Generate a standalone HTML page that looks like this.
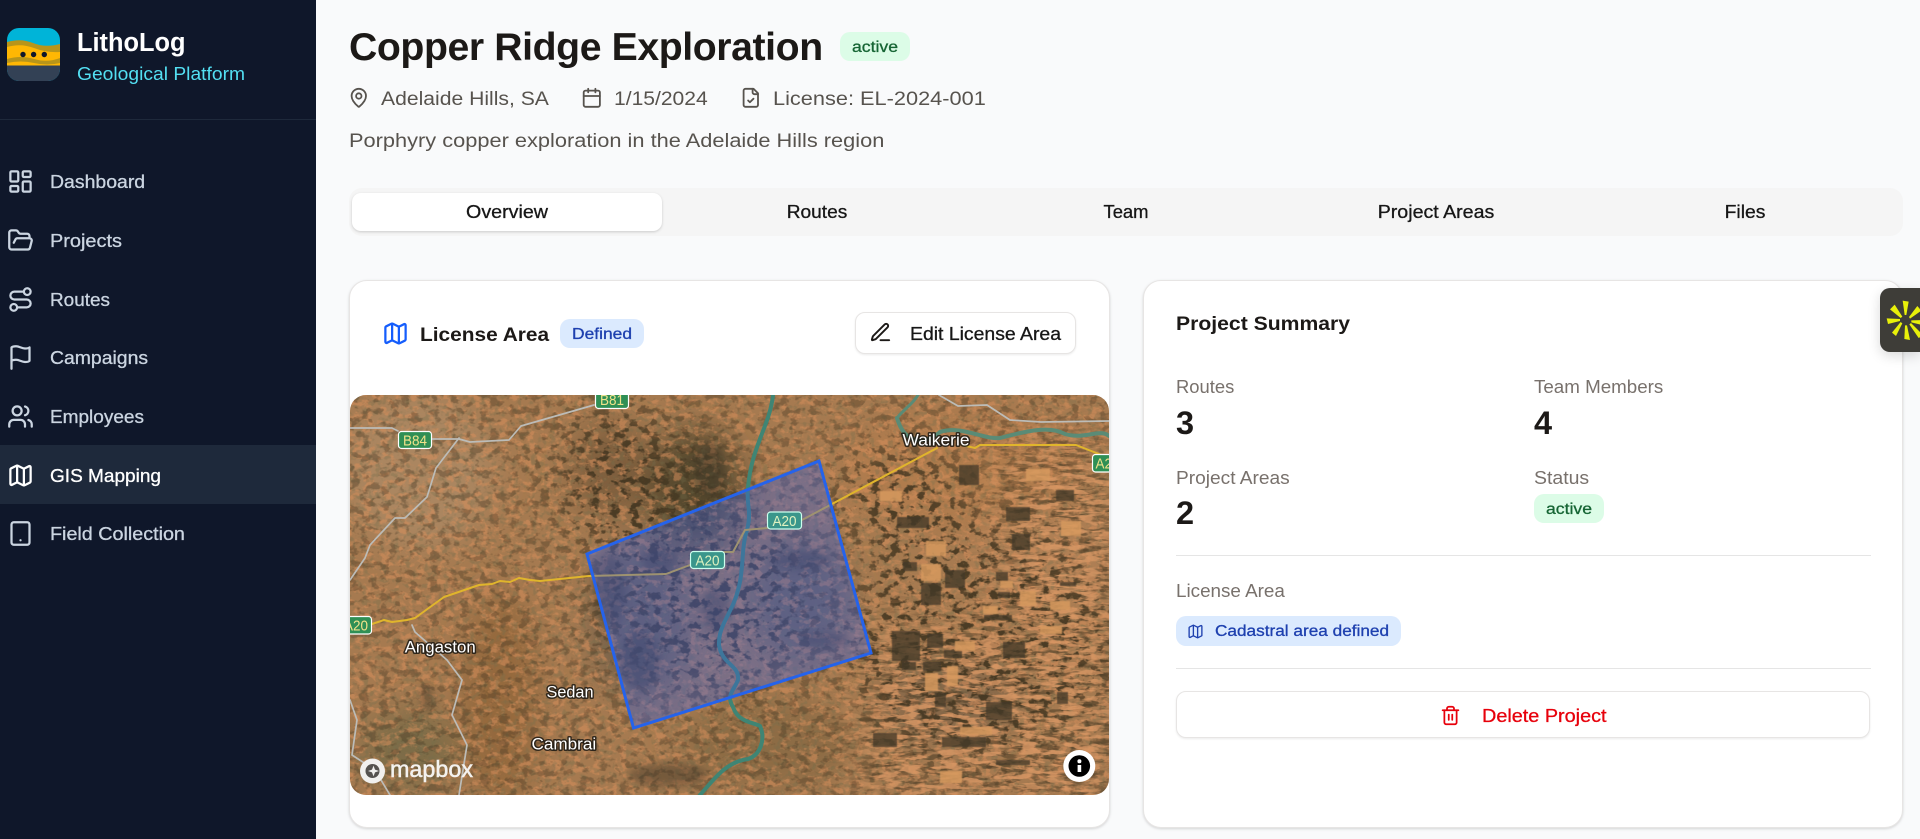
<!DOCTYPE html>
<html lang="en"><head><meta charset="utf-8"><title>Copper Ridge Exploration</title>
<style>
*{box-sizing:border-box}
html,body{margin:0;padding:0;width:1920px;height:839px;overflow:hidden;background:#f9fafb;font-family:"Liberation Sans",sans-serif}
.t{position:absolute;white-space:nowrap;line-height:0;transform-origin:0 0}
.c{text-align:center;transform-origin:50% 0}
.m{-webkit-text-stroke:.3px currentColor}
.abs{position:absolute}
svg.i{position:absolute;fill:none;stroke:currentColor;stroke-width:2;stroke-linecap:round;stroke-linejoin:round}
.nav{color:#cbd5e1;font-size:18.4px}
.lab{font-size:18.4px;color:#78716c}
.val{font-size:32.5px;font-weight:700;color:#1c1917}
.meta{font-size:19.6px;color:#57534e}
.tab{font-size:18.4px;color:#171717}
.badge{position:absolute;background:#dcfce7;border-radius:10px;height:29px}
.card{position:absolute;background:#fff;border:1px solid #e7e5e4;border-radius:18px;top:279.5px;height:548px;box-shadow:0 1px 3px rgba(0,0,0,.1),0 1px 2px rgba(0,0,0,.06)}
</style></head><body>

<div class="abs" style="left:0;top:0;width:316px;height:839px;background:#0f172a"></div>
<svg class="abs" style="left:7px;top:28px" width="53" height="53" viewBox="0 0 53 53"><defs><clipPath id="lg"><rect width="53" height="53" rx="12"/></clipPath></defs><g clip-path="url(#lg)"><rect width="53" height="53" fill="#00b4d8"/><path d="M0 14Q14 10 26 15T53 16V37H0Z" fill="#b8951a"/><path d="M0 19Q14 15 27 20T53 24V37H0Z" fill="#ffb703"/><path d="M0 31Q14 27 27 31T53 30V37H0Z" fill="#b8951a"/><path d="M0 35Q14 32 27 35T53 35V38H0Z" fill="#ffb703"/><rect y="37.5" width="53" height="16" fill="#334155"/><circle cx="16" cy="26.5" r="2.7" fill="#0f172a"/><circle cx="26.6" cy="26.5" r="2.7" fill="#0f172a"/><circle cx="37.3" cy="26.5" r="2.7" fill="#0f172a"/></g></svg>
<div class="t" style="left:77px;top:43.2px;font-size:25.5px;font-weight:700;color:#fff;transform:scaleX(.995)">LithoLog</div>
<div class="t" style="left:77px;top:73.9px;font-size:18.4px;color:#53dff2;transform:scaleX(1.047)">Geological Platform</div>
<div class="abs" style="left:0;top:119px;width:316px;height:1px;background:#1e293b"></div>
<div class="abs" style="left:0;top:445px;width:316px;height:59px;background:#1e293b"></div>

<svg class="i" style="left:6.5px;top:168px;color:#cbd5e1" width="27" height="27" viewBox="0 0 24 24"><rect x="3" y="3" width="7" height="9" rx="1"/><rect x="14" y="3" width="7" height="5" rx="1"/><rect x="14" y="12" width="7" height="9" rx="1"/><rect x="3" y="16" width="7" height="5" rx="1"/></svg>
<div class="t nav m" style="left:50px;top:182.4px;transform:scaleX(1.057)">Dashboard</div>
<svg class="i" style="left:6.5px;top:226.8px;color:#cbd5e1" width="27" height="27" viewBox="0 0 24 24"><path d="m6 14 1.5-2.9A2 2 0 0 1 9.24 10H20a2 2 0 0 1 1.94 2.5l-1.54 6a2 2 0 0 1-1.95 1.5H4a2 2 0 0 1-2-2V5a2 2 0 0 1 2-2h3.9a2 2 0 0 1 1.69.9l.81 1.2a2 2 0 0 0 1.67.9H18a2 2 0 0 1 2 2v2"/></svg>
<div class="t nav m" style="left:50px;top:241px;transform:scaleX(1.083)">Projects</div>
<svg class="i" style="left:6.5px;top:285.5px;color:#cbd5e1" width="27" height="27" viewBox="0 0 24 24"><circle cx="6" cy="19" r="3"/><path d="M9 19h8.5a3.5 3.5 0 0 0 0-7h-11a3.5 3.5 0 0 1 0-7H15"/><circle cx="18" cy="5" r="3"/></svg>
<div class="t nav m" style="left:50px;top:299.5px;transform:scaleX(1.03)">Routes</div>
<svg class="i" style="left:6.5px;top:344.2px;color:#cbd5e1" width="27" height="27" viewBox="0 0 24 24"><path d="M4 15s1-1 4-1 5 2 8 2 4-1 4-1V3s-1 1-4 1-5-2-8-2-4 1-4 1z"/><path d="M4 22v-7"/></svg>
<div class="t nav m" style="left:50px;top:357.5px;transform:scaleX(1.054)">Campaigns</div>
<svg class="i" style="left:6.5px;top:403px;color:#cbd5e1" width="27" height="27" viewBox="0 0 24 24"><path d="M16 21v-2a4 4 0 0 0-4-4H6a4 4 0 0 0-4 4v2"/><circle cx="9" cy="7" r="4"/><path d="M22 21v-2a4 4 0 0 0-3-3.87"/><path d="M16 3.13a4 4 0 0 1 0 7.75"/></svg>
<div class="t nav m" style="left:50px;top:416.6px;transform:scaleX(1.033)">Employees</div>
<svg class="i" style="left:6.5px;top:461.8px;color:#fff" width="27" height="27" viewBox="0 0 24 24"><path d="M14.106 5.553a2 2 0 0 0 1.788 0l3.659-1.83A1 1 0 0 1 21 4.619v12.764a1 1 0 0 1-.553.894l-4.553 2.277a2 2 0 0 1-1.788 0l-4.212-2.106a2 2 0 0 0-1.788 0l-3.659 1.83A1 1 0 0 1 3 19.381V6.618a1 1 0 0 1 .553-.894l4.553-2.277a2 2 0 0 1 1.788 0z"/><path d="M15 5.764v15"/><path d="M9 3.236v15"/></svg>
<div class="t nav m" style="left:50px;top:475.6px;transform:scaleX(1.034);color:#fff">GIS Mapping</div>
<svg class="i" style="left:6.5px;top:519.8px;color:#cbd5e1" width="27" height="27" viewBox="0 0 24 24"><rect x="4" y="2" width="16" height="20" rx="2"/><path d="M12 18h.01"/></svg>
<div class="t nav m" style="left:50px;top:534px;transform:scaleX(1.073)">Field Collection</div>

<div class="t" style="left:349px;top:48px;font-size:39.2px;font-weight:700;color:#1c1917;letter-spacing:-.4px">Copper Ridge Exploration</div>
<div class="badge" style="left:840px;top:32px;width:70px"></div>
<div class="t m c" style="left:840px;width:70px;top:47.9px;font-size:15.5px;color:#166534;transform:scaleX(1.136)">active</div>

<svg class="i" style="left:348.2px;top:87px;color:#57534e" width="21.6" height="21.6" viewBox="0 0 24 24"><path d="M20 10c0 4.993-5.539 10.193-7.399 11.799a1 1 0 0 1-1.202 0C9.539 20.193 4 14.993 4 10a8 8 0 0 1 16 0"/><circle cx="12" cy="10" r="3"/></svg>
<div class="t meta" style="left:380.6px;top:98.8px;transform:scaleX(1.078)">Adelaide Hills, SA</div>
<svg class="i" style="left:581.2px;top:87px;color:#57534e" width="21.6" height="21.6" viewBox="0 0 24 24"><path d="M8 2v4"/><path d="M16 2v4"/><rect x="3" y="4" width="18" height="18" rx="2"/><path d="M3 10h18"/></svg>
<div class="t meta" style="left:613.5px;top:98.8px;transform:scaleX(1.075)">1/15/2024</div>
<svg class="i" style="left:739.7px;top:87px;color:#57534e" width="21.6" height="21.6" viewBox="0 0 24 24"><path d="M15 2H6a2 2 0 0 0-2 2v16a2 2 0 0 0 2 2h12a2 2 0 0 0 2-2V7Z"/><path d="M14 2v4a2 2 0 0 0 2 2h4"/><path d="m9 15 2 2 4-4"/></svg>
<div class="t meta" style="left:773px;top:98.8px;transform:scaleX(1.11)">License: EL-2024-001</div>
<div class="t meta" style="left:349px;top:140.5px;transform:scaleX(1.112)">Porphyry copper exploration in the Adelaide Hills region</div>

<div class="abs" style="left:349px;top:188.3px;width:1554px;height:47.5px;background:#f5f5f5;border-radius:13px"></div>
<div class="abs" style="left:352px;top:193px;width:310px;height:38px;background:#fff;border-radius:9px;box-shadow:0 1px 3px rgba(0,0,0,.12),0 1px 2px rgba(0,0,0,.06)"></div>
<div class="t tab m c" style="left:352px;width:310px;top:212.2px;transform:scaleX(1.069)">Overview</div>
<div class="t tab m c" style="left:662px;width:310px;top:212.2px;transform:scaleX(1.04)">Routes</div>
<div class="t tab m c" style="left:971px;width:310px;top:212.2px">Team</div>
<div class="t tab m c" style="left:1281px;width:310px;top:212.2px;transform:scaleX(1.066)">Project Areas</div>
<div class="t tab m c" style="left:1590px;width:310px;top:212.2px;transform:scaleX(1.05)">Files</div>

<div class="card" style="left:349px;width:761px"></div>
<svg class="i" style="left:381.5px;top:320px;color:#155dfc" width="27" height="27" viewBox="0 0 24 24"><path d="M14.106 5.553a2 2 0 0 0 1.788 0l3.659-1.83A1 1 0 0 1 21 4.619v12.764a1 1 0 0 1-.553.894l-4.553 2.277a2 2 0 0 1-1.788 0l-4.212-2.106a2 2 0 0 0-1.788 0l-3.659 1.83A1 1 0 0 1 3 19.381V6.618a1 1 0 0 1 .553-.894l4.553-2.277a2 2 0 0 1 1.788 0z"/><path d="M15 5.764v15"/><path d="M9 3.236v15"/></svg>
<div class="t" style="left:419.6px;top:334.7px;font-size:19.6px;font-weight:700;color:#1c1917;transform:scaleX(1.065)">License Area</div>
<div class="abs" style="left:560px;top:319px;width:83.5px;height:28.7px;background:#dbeafe;border-radius:10px"></div>
<div class="t m" style="left:572px;top:334.9px;font-size:15.5px;color:#1e40af;transform:scaleX(1.124)">Defined</div>
<div class="abs" style="left:855.4px;top:312.3px;width:221px;height:42px;background:#fff;border:1px solid #e7e5e4;border-radius:10px;box-shadow:0 1px 2px rgba(0,0,0,.08)"></div>
<svg class="i" style="left:868.7px;top:321.3px;color:#1c1917" width="23" height="23" viewBox="0 0 24 24"><path d="M12 20h9"/><path d="M16.376 3.622a1 1 0 0 1 3.002 3.002L7.368 18.635a2 2 0 0 1-.855.506l-2.872.838a.5.5 0 0 1-.62-.62l.838-2.872a2 2 0 0 1 .506-.854z"/></svg>
<div class="t m" style="left:910px;top:333.9px;font-size:18.4px;color:#171717;transform:scaleX(1.055)">Edit License Area</div>

<div class="abs" style="left:350px;top:395px;width:759px;height:400px;border-radius:16px;overflow:hidden">
<svg width="759" height="400" viewBox="350 395 759 400" style="display:block">
<defs>
<filter id="b1" x="-50%" y="-50%" width="200%" height="200%"><feGaussianBlur stdDeviation="16"/></filter>
<filter id="b2" x="-50%" y="-50%" width="200%" height="200%"><feGaussianBlur stdDeviation="4"/></filter>
<filter id="b3"><feGaussianBlur stdDeviation=".5"/></filter>
<filter id="bm" x="-50%" y="-50%" width="200%" height="200%"><feGaussianBlur stdDeviation="22"/></filter>
<filter id="dk" x="0" y="0" width="100%" height="100%" color-interpolation-filters="sRGB"><feTurbulence type="fractalNoise" baseFrequency=".1 .13" numOctaves="3" seed="8"/><feColorMatrix values="0 0 0 0 .26 0 0 0 0 .21 0 0 0 0 .13 7 0 0 0 -3.6"/></filter>
<filter id="or" x="0" y="0" width="100%" height="100%" color-interpolation-filters="sRGB"><feTurbulence type="fractalNoise" baseFrequency=".11 .15" numOctaves="3" seed="23"/><feColorMatrix values="0 0 0 0 .84 0 0 0 0 .56 0 0 0 0 .36 6 0 0 0 -3"/></filter>
<filter id="gr" x="0" y="0" width="100%" height="100%" color-interpolation-filters="sRGB"><feTurbulence type="fractalNoise" baseFrequency=".16 .18" numOctaves="2" seed="41"/><feColorMatrix values="0 0 0 0 .45 0 0 0 0 .43 0 0 0 0 .3 6 0 0 0 -3.2"/></filter>
<filter id="hz" x="0" y="0" width="100%" height="100%" color-interpolation-filters="sRGB"><feTurbulence type="fractalNoise" baseFrequency=".05 .22" numOctaves="3" seed="15"/><feColorMatrix values="0 0 0 0 .28 0 0 0 0 .23 0 0 0 0 .15 8 0 0 0 -4.2"/></filter>
<filter id="hzo" x="0" y="0" width="100%" height="100%" color-interpolation-filters="sRGB"><feTurbulence type="fractalNoise" baseFrequency=".05 .2" numOctaves="3" seed="77"/><feColorMatrix values="0 0 0 0 .86 0 0 0 0 .6 0 0 0 0 .4 8 0 0 0 -4"/></filter>
<mask id="mdk" maskUnits="userSpaceOnUse" x="350" y="395" width="759" height="400"><rect x="350" y="395" width="759" height="400" fill="#666"/><g filter="url(#bm)" fill="#fff"><ellipse cx="620" cy="480" rx="60" ry="70"/><ellipse cx="980" cy="640" rx="130" ry="120"/><ellipse cx="900" cy="500" rx="60" ry="50"/><ellipse cx="710" cy="600" rx="100" ry="90"/></g></mask>
<mask id="mhz" maskUnits="userSpaceOnUse" x="350" y="395" width="759" height="400"><rect x="350" y="395" width="759" height="400" fill="#000"/><g filter="url(#bm)" fill="#fff"><rect x="860" y="620" width="260" height="190"/><rect x="1000" y="440" width="120" height="180"/></g></mask>
</defs>
<rect x="350" y="395" width="759" height="400" fill="#a67a50"/>
<g filter="url(#b1)">
<ellipse cx="420" cy="470" rx="75" ry="80" fill="#ab8660"/>
<ellipse cx="610" cy="470" rx="40" ry="50" fill="#7f5f3c"/>
<ellipse cx="695" cy="490" rx="48" ry="62" fill="#57482f"/>
<ellipse cx="640" cy="620" rx="50" ry="80" fill="#75614a"/>
<ellipse cx="500" cy="700" rx="38" ry="110" fill="#94693c"/>
<ellipse cx="410" cy="750" rx="50" ry="40" fill="#7d6c47"/>
<ellipse cx="770" cy="745" rx="90" ry="45" fill="#8d6c45"/>
<ellipse cx="960" cy="470" rx="120" ry="60" fill="#b07c4e"/>
<ellipse cx="950" cy="700" rx="70" ry="40" fill="#866849"/>
<ellipse cx="1040" cy="560" rx="70" ry="50" fill="#b08055"/>
<ellipse cx="800" cy="600" rx="50" ry="60" fill="#75624c"/>
</g>
<rect x="350" y="395" width="759" height="400" filter="url(#or)" opacity=".55"/>
<rect x="350" y="395" width="759" height="400" filter="url(#gr)" opacity=".32"/>
<g mask="url(#mdk)"><rect x="350" y="395" width="759" height="400" filter="url(#dk)" opacity=".9"/></g>
<g mask="url(#mhz)"><rect x="350" y="395" width="759" height="400" filter="url(#hz)" opacity=".55"/><rect x="350" y="395" width="759" height="400" filter="url(#hzo)" opacity=".8"/></g>
<g filter="url(#b2)" fill="#3e3626" opacity=".45">
<ellipse cx="610" cy="590" rx="16" ry="36"/><ellipse cx="660" cy="560" rx="18" ry="14"/><ellipse cx="640" cy="660" rx="20" ry="30"/><ellipse cx="715" cy="610" rx="14" ry="22"/><ellipse cx="800" cy="560" rx="30" ry="10"/><ellipse cx="825" cy="640" rx="24" ry="8"/><ellipse cx="710" cy="470" rx="16" ry="28"/><ellipse cx="668" cy="775" rx="40" ry="12"/><ellipse cx="427" cy="698" rx="6" ry="14"/>
</g>
<g filter="url(#b3)">
<g fill="#42392a" opacity=".78">
<rect x="921" y="583" width="20" height="22"/><rect x="945" y="570" width="20" height="18"/><rect x="892" y="631" width="28" height="30"/><rect x="902" y="662" width="14" height="8"/><rect x="923" y="662" width="18" height="9"/><rect x="927" y="634" width="16" height="14"/><rect x="944" y="650" width="18" height="8"/><rect x="996" y="572" width="12" height="9"/><rect x="998" y="592" width="12" height="6"/><rect x="984" y="615" width="28" height="5"/><rect x="1003" y="642" width="22" height="16"/><rect x="935" y="693" width="11" height="14"/><rect x="986" y="702" width="26" height="18"/><rect x="1057" y="692" width="11" height="12"/><rect x="942" y="737" width="44" height="10"/><rect x="873" y="733" width="24" height="14"/><rect x="897" y="517" width="32" height="11"/><rect x="959" y="465" width="20" height="20"/><rect x="1056" y="490" width="18" height="11"/><rect x="1006" y="507" width="24" height="14"/><rect x="1012" y="534" width="18" height="16"/><rect x="996" y="760" width="34" height="5"/><rect x="903" y="562" width="14" height="9"/><rect x="1060" y="582" width="16" height="4"/>
</g>
<g fill="#d6995f" opacity=".85">
<rect x="921" y="564" width="20" height="17"/><rect x="983" y="606" width="15" height="8"/><rect x="955" y="641" width="20" height="10"/><rect x="947" y="666" width="11" height="20"/><rect x="925" y="673" width="13" height="18"/><rect x="1000" y="581" width="13" height="7"/><rect x="1020" y="591" width="16" height="15"/><rect x="1050" y="601" width="20" height="9"/><rect x="1040" y="626" width="22" height="8"/><rect x="960" y="727" width="32" height="8"/><rect x="940" y="771" width="22" height="12"/><rect x="880" y="491" width="22" height="10"/><rect x="1026" y="469" width="24" height="12"/><rect x="1061" y="521" width="20" height="15"/><rect x="926" y="541" width="20" height="15"/></g>
</g>
<g fill="none" stroke-linecap="round" stroke-linejoin="round">
<path d="M773 395C770 425 752 445 748 487C746 505 752 510 747 530C741 548 744 570 738 590C733 612 718 625 719 645C722 665 740 665 738 680C733 692 726 695 733 707C738 722 752 722 760 726C766 740 760 755 748 759C726 762 715 778 700 795" stroke="#3f8574" stroke-width="4"/>
<path d="M897 418C905 445 925 445 940 432C960 425 985 440 1000 438C1030 430 1050 426 1065 434C1085 440 1100 428 1109 436" stroke="#5a8b76" stroke-width="4"/>
<path d="M897 418C905 408 912 405 918 395" stroke="#5a8b76" stroke-width="3"/>
<path d="M350 428H392L398 431M432 439H459L470 442L509 440L521 426L594 405" stroke="#bcbcb8" stroke-width="1.7"/>
<path d="M459 438L436 468L427 497L405 518H395L370 545L365 558L350 580" stroke="#bcbcb8" stroke-width="1.7"/>
<path d="M939 395L958 406L987 405L1010 420L1041 422L1109 421" stroke="#bcbcb8" stroke-width="1.7"/>
<path d="M412 625L415 632L447 660L462 680L452 715L467 745L459 795" stroke="#bcbcb8" stroke-width="1.7"/>
<path d="M350 700L357 720L352 755L375 770L390 795" stroke="#bcbcb8" stroke-width="1.7"/>
<path d="M372 624L384 620L392 622L407 620L415 618L444 597L479 585L492 584L500 581L510 582L519 578L530 580L540 581L589 576L666 574L690 565M724 552L733 552L745 530L767 528M802 520L937 448M962 445L975 448L980 445H1076L1109 458" stroke="#e0b52c" stroke-width="2"/>
</g>
<polygon points="819,461 587,554 633.5,728 871,653" fill="#3b5fd6" fill-opacity=".4" stroke="#2563eb" stroke-width="3" stroke-linejoin="miter"/>
<g font-family="Liberation Sans,sans-serif" font-size="15" text-anchor="middle">
<rect x="595.5" y="385" width="33" height="23.5" rx="3" fill="#2f8f55" stroke="#fff" stroke-width="1.2"/><text x="612" y="405" fill="#efe28a" textLength="24" lengthAdjust="spacingAndGlyphs">B81</text>
<rect x="398.5" y="431.5" width="33" height="17" rx="3" fill="#2f8f55" stroke="#fff" stroke-width="1.2"/><text x="415" y="445.5" fill="#efe28a" textLength="24" lengthAdjust="spacingAndGlyphs">B84</text>
<rect x="767.5" y="512" width="34" height="17" rx="3" fill="#3a968b" stroke="#cfe" stroke-width="1.2"/><text x="784.5" y="526" fill="#dff2c0" textLength="24" lengthAdjust="spacingAndGlyphs">A20</text>
<rect x="690.5" y="551.5" width="34" height="17" rx="3" fill="#3a968b" stroke="#cfe" stroke-width="1.2"/><text x="707.5" y="565.5" fill="#dff2c0" textLength="24" lengthAdjust="spacingAndGlyphs">A20</text>
<rect x="340" y="616.5" width="31.5" height="17.5" rx="3" fill="#2f8f55" stroke="#fff" stroke-width="1.2"/><text x="356" y="630.5" fill="#efe28a" textLength="24" lengthAdjust="spacingAndGlyphs">A20</text>
<rect x="1092.5" y="454.5" width="30" height="17.5" rx="3" fill="#2f8f55" stroke="#fff" stroke-width="1.2"/><text x="1107.5" y="468.5" fill="#efe28a" textLength="24" lengthAdjust="spacingAndGlyphs">A20</text>
</g>
<g font-family="Liberation Sans,sans-serif" font-size="17" fill="#fff" stroke="#1d1a14" stroke-width="3" stroke-opacity=".85" paint-order="stroke" stroke-linejoin="round">
<text x="902.5" y="445.7" textLength="67" lengthAdjust="spacingAndGlyphs">Waikerie</text>
<text x="404.7" y="652.7" textLength="71" lengthAdjust="spacingAndGlyphs">Angaston</text>
<text x="546.5" y="697.7" textLength="47" lengthAdjust="spacingAndGlyphs">Sedan</text>
<text x="531.5" y="749.3" textLength="64.7" lengthAdjust="spacingAndGlyphs">Cambrai</text>
</g>
<circle cx="372.5" cy="771" r="12.5" fill="#f1f0ee"/><circle cx="372.5" cy="771" r="7" fill="#55524f"/><path d="M373.5 765.6L375 769.6L379 771L375 772.4L373.5 776.4L372 772.4L368 771L372 769.6Z" fill="#f1f0ee"/>
<text x="390" y="777" font-family="Liberation Sans,sans-serif" font-size="23" fill="#f4f2ef" stroke="#f4f2ef" stroke-width=".5" textLength="83" lengthAdjust="spacingAndGlyphs">mapbox</text>
<circle cx="1079.3" cy="766" r="16" fill="#fff"/><circle cx="1079.3" cy="766" r="10.8" fill="#000"/><rect x="1077.6" y="765" width="3.6" height="7" fill="#fff"/><circle cx="1079.4" cy="761.3" r="2" fill="#fff"/>
</svg>
</div>

<div class="card" style="left:1143px;width:760px"></div>
<div class="t" style="left:1176px;top:324px;font-size:19.6px;font-weight:700;color:#1c1917;transform:scaleX(1.08)">Project Summary</div>
<div class="t lab" style="left:1176px;top:387px">Routes</div>
<div class="t val" style="left:1176px;top:422.6px">3</div>
<div class="t lab" style="left:1534px;top:387px;transform:scaleX(1.02)">Team Members</div>
<div class="t val" style="left:1534px;top:422.6px">4</div>
<div class="t lab" style="left:1176px;top:477.5px;transform:scaleX(1.04)">Project Areas</div>
<div class="t val" style="left:1176px;top:513.3px">2</div>
<div class="t lab" style="left:1534px;top:477.5px;transform:scaleX(1.058)">Status</div>
<div class="badge" style="left:1534px;top:494px;width:70px"></div>
<div class="t m c" style="left:1534px;width:70px;top:510.2px;font-size:15.5px;color:#166534;transform:scaleX(1.136)">active</div>
<div class="abs" style="left:1175.5px;top:555px;width:695.5px;height:1px;background:#e5e5e5"></div>
<div class="t lab" style="left:1176px;top:590.6px;transform:scaleX(1.024)">License Area</div>
<div class="abs" style="left:1176px;top:616px;width:224.5px;height:29.7px;background:#dbeafe;border-radius:10px"></div>
<svg class="i" style="left:1187.2px;top:622.5px;color:#1e40af;stroke-width:1.9" width="17" height="17" viewBox="0 0 24 24"><path d="M14.106 5.553a2 2 0 0 0 1.788 0l3.659-1.83A1 1 0 0 1 21 4.619v12.764a1 1 0 0 1-.553.894l-4.553 2.277a2 2 0 0 1-1.788 0l-4.212-2.106a2 2 0 0 0-1.788 0l-3.659 1.83A1 1 0 0 1 3 19.381V6.618a1 1 0 0 1 .553-.894l4.553-2.277a2 2 0 0 1 1.788 0z"/><path d="M15 5.764v15"/><path d="M9 3.236v15"/></svg>
<div class="t m" style="left:1214.6px;top:632.2px;font-size:15.5px;color:#1e40af;transform:scaleX(1.11)">Cadastral area defined</div>
<div class="abs" style="left:1175.5px;top:668px;width:695.5px;height:1.3px;background:#e5e5e5"></div>
<div class="abs" style="left:1176.3px;top:691.3px;width:693.7px;height:47px;background:#fff;border:1px solid #e7e5e4;border-radius:10px;box-shadow:0 1px 2px rgba(0,0,0,.08)"></div>
<svg class="i" style="left:1440.3px;top:705px;color:#e7000b" width="21" height="21" viewBox="0 0 24 24"><path d="M3 6h18"/><path d="M19 6v14c0 1-1 2-2 2H7c-1 0-2-1-2-2V6"/><path d="M8 6V4c0-1 1-2 2-2h4c1 0 2 1 2 2v2"/><path d="M10 11v6"/><path d="M14 11v6"/></svg>
<div class="t m" style="left:1482.2px;top:715.6px;font-size:18.4px;color:#e7000b;transform:scaleX(1.078)">Delete Project</div>

<div class="abs" style="left:1880px;top:288px;width:40px;height:64px;background:#3e3d38;border-radius:10px 0 0 10px;box-shadow:0 4px 12px rgba(0,0,0,.15)"></div>
<svg class="abs" style="left:1860px;top:270px" width="60" height="90" viewBox="0 0 180 270"><g fill="#e8f00a"><polygon points="128,92 146,95 139,135 134,135"/><polygon points="90,118 104,104 127,140 122,144"/><polygon points="80,145 84,162 120,153 120,147"/><polygon points="96,188 108,198 127,160 122,156"/><polygon points="133,207 150,210 141,166 135,166"/><polygon points="172,108 184,122 150,146 147,141"/><polygon points="190,150 190,166 154,157 154,151"/><polygon points="190,196 176,204 148,163 153,159"/></g></svg>
</body></html>
